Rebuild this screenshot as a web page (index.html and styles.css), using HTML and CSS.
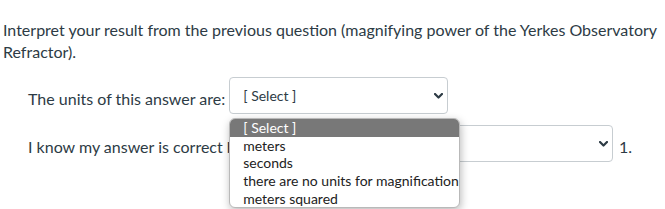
FILE: index.html
```html
<!DOCTYPE html>
<html>
<head>
<meta charset="utf-8">
<link rel="stylesheet" href="styles.css">
</head>
<body>
<div class="page">
  <p class="prompt">Interpret your result from the previous question (magnifying power of the Yerkes Observatory Refractor).</p>
  <div class="row">
    <span class="label">The units of this answer are:</span>
    <div class="select-wrap">
      <div class="select select-units">
        <span class="value">[ Select ]</span>
        <svg class="chev" width="9" height="6" viewBox="0 0 9 6"><path d="M1 1 L4.5 4.5 L8 1" fill="none" stroke="#2d3b45" stroke-width="2.2" stroke-linecap="round" stroke-linejoin="round"/></svg>
      </div>
      <ul class="dropdown">
        <li class="active">[ Select ]</li>
        <li>meters</li>
        <li>seconds</li>
        <li>there are no units for magnification</li>
        <li>meters squared</li>
      </ul>
    </div>
  </div>
  <div class="row row-2">
    <span class="label">I know my answer is correct because</span>
    <div class="select select-reason">
      <span class="value"></span>
      <svg class="chev" width="9" height="6" viewBox="0 0 9 6"><path d="M1 1 L4.5 4.5 L8 1" fill="none" stroke="#2d3b45" stroke-width="2.2" stroke-linecap="round" stroke-linejoin="round"/></svg>
    </div>
    <span class="label num">1.</span>
  </div>
</div>
</body>
</html>
```
FILE: styles.css
```css
html, body {
  margin: 0;
  padding: 0;
  background: #ffffff;
}

body {
  min-height: 209px;
}

.page {
  box-sizing: border-box;
  min-height: 209px;
  padding: 18.5px 0 0 3px;
  font-family: Lato, "Liberation Sans", sans-serif;
  font-size: 16px;
  line-height: 22px;
  color: #2d3b45;
}

.prompt {
  margin: 0 0 14.5px 0;
}

.row {
  display: flex;
  align-items: flex-start;
  gap: 4px;
  margin-left: 25px;
}

.row + .row {
  margin-top: 11px;
}

.row-2 {
  width: 607px;
}

.label {
  margin-top: 12px;
  line-height: 20px;
  white-space: nowrap;
}

.num {
  margin-left: 2px;
  width: 16px;
  flex: none;
}

.select-wrap {
  position: relative;
  z-index: 2;
}

.select {
  box-sizing: border-box;
  height: 37px;
  border: 1px solid #c7cdd1;
  border-radius: 4px;
  background: #ffffff;
  display: flex;
  align-items: center;
  justify-content: space-between;
  padding: 0 4px 0 13px;
  font-size: 14px;
  line-height: 18px;
  color: #2d3b45;
}

.select-units {
  width: 219px;
}

.select-reason {
  flex: 1;
  min-width: 0;
}

.chev {
  display: block;
  flex: none;
}

.dropdown {
  position: absolute;
  top: 41px;
  left: 0;
  width: 231px;
  box-sizing: border-box;
  margin: 0;
  padding: 0;
  list-style: none;
  background: #ffffff;
  border: 1px solid #b9b9b9;
  border-radius: 6px;
  box-shadow: 1px 3px 9px rgba(0, 0, 0, 0.28);
  overflow: hidden;
  font-size: 14px;
  line-height: 17.65px;
  color: #222222;
}

.dropdown li {
  padding-left: 13px;
  white-space: nowrap;
}

.dropdown li.active {
  background: #787878;
  color: #ffffff;
}
```
